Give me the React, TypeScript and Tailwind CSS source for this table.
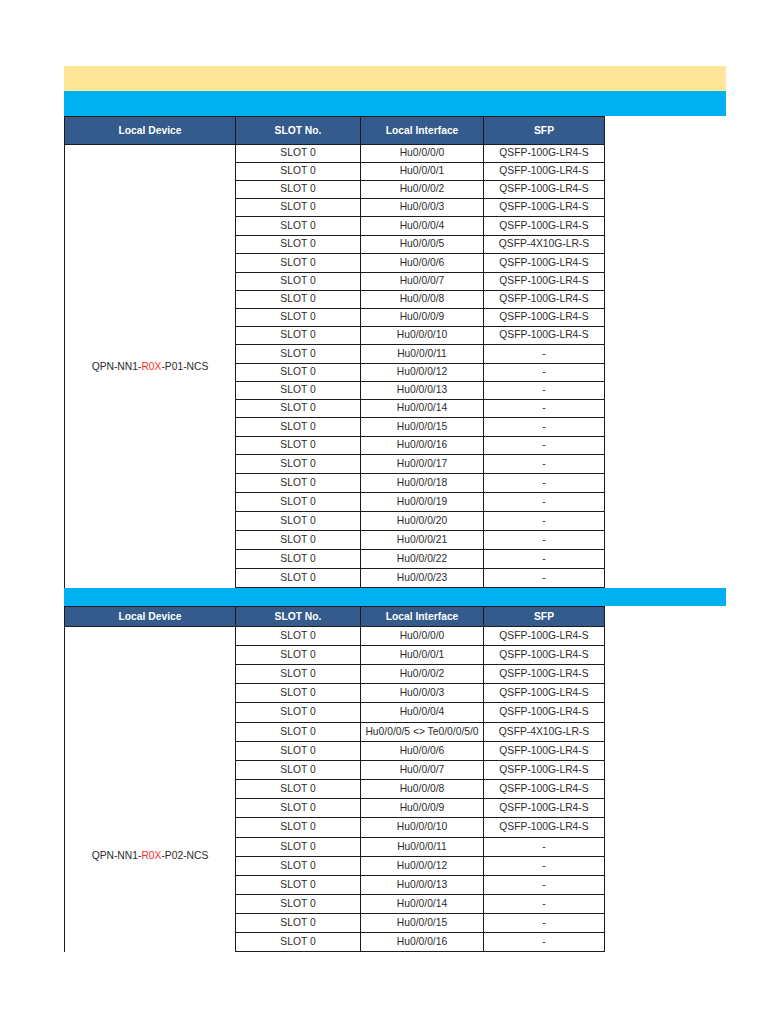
import React from "react";

type Port = { slot: string; iface: string; sfp: string };

const HEADERS = ["Local Device", "SLOT No.", "Local Interface", "SFP"];

// row heights measured off the sheet, they drift by a pixel here and there
const HEIGHTS_1 = [18, 18, 18, 18, 19, 18, 19, 18, 18, 18, 18, 19, 18, 18, 18, 19, 18, 19, 19, 19, 19, 19, 19, 19];
const HEIGHTS_2 = [19, 19, 19, 19, 20, 19, 19, 19, 19, 19, 20, 19, 19, 19, 19, 19, 19];

const makePorts = (count: number, breakout: string): Port[] =>
  Array.from({ length: count }, (_, i) => ({
    slot: "SLOT 0",
    iface: i === 5 ? breakout : `Hu0/0/0/${i}`,
    sfp: i === 5 ? "QSFP-4X10G-LR-S" : i <= 10 ? "QSFP-100G-LR4-S" : "-",
  }));

const DeviceTable: React.FC<{
  device: string;
  ports: Port[];
  heights: number[];
  headerClass: string;
  deviceCellClass: string;
}> = ({ device, ports, heights, headerClass, deviceCellClass }) => {
  const [pre, suf] = device.split("R0X");
  return (
    <table className="table-fixed border-collapse text-[10.3px] text-[#2b2b2b]">
      <colgroup>
        <col className="w-[171px]" />
        <col className="w-[125px]" />
        <col className="w-[123px]" />
        <col className="w-[121px]" />
      </colgroup>
      <thead>
        <tr className={headerClass}>
          {HEADERS.map((h) => (
            <th
              key={h}
              className="border border-[#1c1c1c] bg-[#345b8c] p-0 text-center font-bold text-white"
            >
              {h}
            </th>
          ))}
        </tr>
      </thead>
      <tbody>
        {ports.map((p, i) => (
          <tr key={i} style={{ height: heights[i] }}>
            {i === 0 && (
              <td
                rowSpan={ports.length}
                className={`border-x border-[#1c1c1c] p-0 text-center ${deviceCellClass}`}
              >
                {pre}
                <span className="text-[#ff2a2a]">R0X</span>
                {suf}
              </td>
            )}
            <td className="border border-[#1c1c1c] p-0 text-center leading-none">{p.slot}</td>
            <td className="border border-[#1c1c1c] p-0 text-center leading-none whitespace-nowrap">{p.iface}</td>
            <td className="border border-[#1c1c1c] p-0 text-center leading-none">{p.sfp}</td>
          </tr>
        ))}
      </tbody>
    </table>
  );
};

export default function App() {
  return (
    <div className="h-[1024px] w-[768px] overflow-hidden bg-white font-['Liberation_Sans',Arial,sans-serif]">
      <div className="pt-[66px] pl-[64px]">
        <div className="h-[25px] w-[662px] bg-[#ffe699]" />
        <div className="h-[25px] w-[662px] bg-[#00b0f0]" />
        <DeviceTable
          device="QPN-NN1-R0X-P01-NCS"
          ports={makePorts(24, "Hu0/0/0/5")}
          heights={HEIGHTS_1}
          headerClass="h-[28px]"
          deviceCellClass="align-middle"
        />
        <div className="h-[18px] w-[662px] bg-[#00b0f0]" />
        <DeviceTable
          device="QPN-NN1-R0X-P02-NCS"
          ports={makePorts(17, "Hu0/0/0/5 <> Te0/0/0/5/0")}
          heights={HEIGHTS_2}
          headerClass="h-[20px]"
          deviceCellClass="align-top pt-[224px] leading-none"
        />
      </div>
    </div>
  );
}
